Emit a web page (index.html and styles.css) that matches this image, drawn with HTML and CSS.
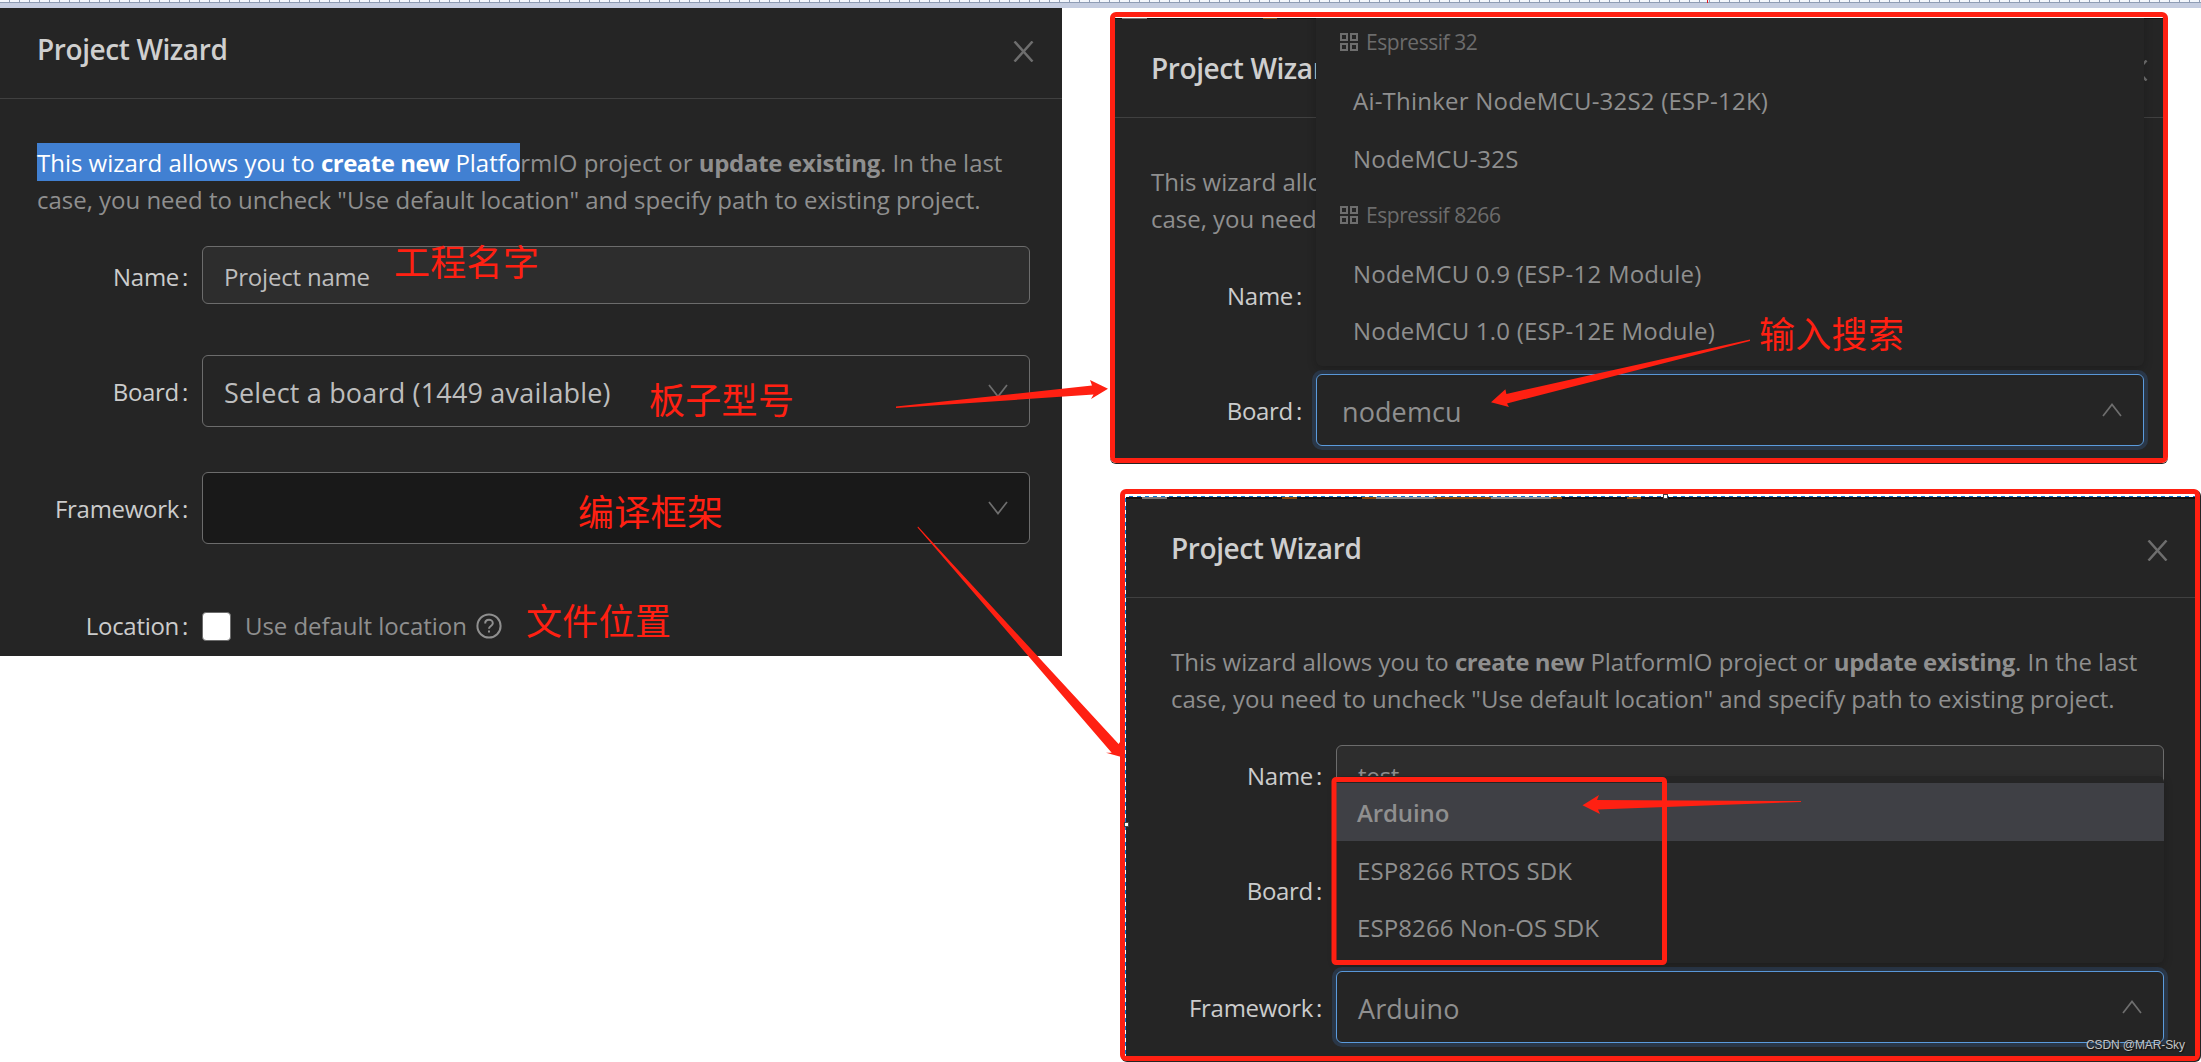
FILE: index.html
```html
<!DOCTYPE html>
<html lang="zh-CN">
<head>
  <meta charset="UTF-8">
  <title>PlatformIO Project Wizard</title>
  <link rel="stylesheet" href="styles.css">
</head>
<body>
  <svg class="defs" width="0" height="0">
    <symbol id="close" viewBox="0 0 21 21"><path d="M1.5 0.5L19.5 20.5M19.5 0.5L1.5 20.5"/></symbol>
    <symbol id="down" viewBox="0 0 20 14"><path d="M1 1L10 12.5L19 1"/></symbol>
    <symbol id="up" viewBox="0 0 20 14"><path d="M1 13L10 1.5L19 13"/></symbol>
    <symbol id="grid" viewBox="0 0 18 18"><path d="M1 1h6v6h-6zM11 1h6v6h-6zM1 11h6v6h-6zM11 11h6v6h-6z"/></symbol>
  </svg>

  <div class="ruler"><i class="ruler-mark"></i></div>

  <main>
    <section class="wizard main-wizard">
      <header>
        <h2>Project Wizard</h2>
        <svg class="close"><use href="#close"/></svg>
      </header>
      <div class="content">
        <p class="intro"><span class="selected">This wizard allows you to <b>create new</b> Platfo</span>rmIO project or <b>update existing</b>. In the last<br>case, you need to uncheck "Use default location" and specify path to existing project.</p>
        <div class="row name-row">
          <label>Name<i>:</i></label>
          <div class="control input">Project name</div>
        </div>
        <div class="row board-row">
          <label>Board<i>:</i></label>
          <div class="control select"><span>Select a board (1449 available)</span><svg class="arrow"><use href="#down"/></svg></div>
        </div>
        <div class="row framework-row">
          <label>Framework<i>:</i></label>
          <div class="control select disabled"><svg class="arrow"><use href="#down"/></svg></div>
        </div>
        <div class="row location-row">
          <label>Location<i>:</i></label>
          <span class="checkbox"></span>
          <span class="check-text">Use default location</span>
          <svg class="help" viewBox="0 0 26 26"><circle cx="13" cy="13" r="11.6"/><path d="M9.2 10.4c0-2.2 1.7-3.6 3.8-3.6s3.8 1.4 3.8 3.4c0 2.8-3.8 2.8-3.8 5.6M13 17.6v2"/></svg>
        </div>
      </div>
    </section>

    <div class="shots">
      <div class="shot shot-board">
        <section class="wizard">
          <header>
            <h2>Project Wizard</h2>
            <svg class="close"><use href="#close"/></svg>
          </header>
          <div class="content">
            <p class="intro">This wizard allows<br>case, you need</p>
            <div class="row name-row">
              <label>Name<i>:</i></label>
              <div class="control input"></div>
            </div>
            <div class="row board-row">
              <label>Board<i>:</i></label>
              <div class="control select focused search">
                <span>nodemcu</span><svg class="arrow"><use href="#up"/></svg>
                <ul class="menu">
                  <li class="group"><svg><use href="#grid"/></svg>Espressif 32</li>
                  <li>Ai-Thinker NodeMCU-32S2 (ESP-12K)</li>
                  <li>NodeMCU-32S</li>
                  <li class="group"><svg><use href="#grid"/></svg>Espressif 8266</li>
                  <li>NodeMCU 0.9 (ESP-12 Module)</li>
                  <li>NodeMCU 1.0 (ESP-12E Module)</li>
                </ul>
              </div>
            </div>
          </div>
        </section>
      </div>

      <div class="shot shot-framework">
        <section class="wizard">
          <header>
            <h2>Project Wizard</h2>
            <svg class="close"><use href="#close"/></svg>
          </header>
          <div class="content">
            <p class="intro">This wizard allows you to <b>create new</b> PlatformIO project or <b>update existing</b>. In the last<br>case, you need to uncheck "Use default location" and specify path to existing project.</p>
            <div class="row name-row">
              <label>Name<i>:</i></label>
              <div class="control input typed">test</div>
            </div>
            <div class="row board-row">
              <label>Board<i>:</i></label>
              <div class="control select"></div>
            </div>
            <div class="row framework-row">
              <label>Framework<i>:</i></label>
              <div class="control select focused">
                <span>Arduino</span><svg class="arrow"><use href="#up"/></svg>
                <ul class="menu">
                  <li class="active">Arduino</li>
                  <li>ESP8266 RTOS SDK</li>
                  <li>ESP8266 Non-OS SDK</li>
                </ul>
              </div>
            </div>
          </div>
        </section>
        <i class="handle handle-top"></i>
        <i class="handle handle-left"></i>
      </div>
    </div>
  </main>

  <!-- red notes on top of everything -->
  <span class="note note-name">工程名字</span>
  <span class="note note-board">板子型号</span>
  <span class="note note-framework">编译框架</span>
  <span class="note note-location">文件位置</span>
  <span class="note note-search">输入搜索</span>
  <svg class="arrows" viewBox="0 0 2201 1062">
    <path d="M896 406.5L1092 385.5L1090 380L1108 388.7L1091 399L1093.5 394.5L896 408z"/>
    <path d="M918 526.5L1118.6 744L1121 740.5L1125 758L1106 752.7L1111.7 752.7L917.5 527.5z"/>
    <path d="M1750 339.5L1506.4 394L1505.4 389.3L1491 402.3L1509 407L1507 403.5L1750 341z"/>
    <path d="M1801 801L1597 800L1599 795L1582.5 805.3L1600 814L1598 809.5L1801 802z"/>
    <rect x="1334" y="779.5" width="330.5" height="183" rx="2"/>
  </svg>
  <span class="watermark">CSDN @MAR-Sky</span>
</body>
</html>
```

FILE: styles.css
```css
* {
  box-sizing: border-box;
}
body {
  position: relative;
  width: 2201px;
  height: 1062px;
  margin: 0;
  overflow: hidden;
  background: #fff;
  font-family: "Open Sans", "Noto Sans CJK SC", sans-serif;
  font-size: 24px;
  letter-spacing: -0.2px;
  color: #8f8f8f;
}
i {
  font-style: normal;
}
.defs {
  position: absolute;
}
svg {
  fill: none;
  stroke: #6e6e6e;
  stroke-width: 2;
  flex: none;
}

/* top ruler */
.ruler {
  position: relative;
  height: 8px;
  background:
    linear-gradient(#8f9db5, #8f9db5) 0 2px / 100% 1px no-repeat,
    repeating-linear-gradient(90deg, transparent 0 9px, #8f9db5 9px 10px) 0 0 / 100% 2px no-repeat,
    linear-gradient(#f3f6fc 0 3px, #c5cde0 3px);
}
.ruler-mark {
  position: absolute;
  left: 1707px;
  top: 0;
  width: 1px;
  height: 3px;
  background: #e8101c;
}

main {
  display: flex;
}

/* wizard dialog */
.wizard {
  --left: 37px;
  background: #252525;
  overflow: hidden;
}
.main-wizard {
  width: 1062px;
  height: 648px;
}
.wizard header {
  display: flex;
  justify-content: space-between;
  align-items: flex-end;
  height: 91px;
  padding: 0 28px 30px var(--left);
  border-bottom: 1px solid #404040;
}
h2 {
  margin: 0;
  font-size: 28px;
  line-height: 38px;
  font-weight: 600;
  letter-spacing: -0.4px;
  color: #cfcfcf;
}
.close {
  width: 21px;
  height: 21px;
  margin-bottom: 6px;
  stroke-width: 2.5;
}
.content {
  padding: 45px 0 0 var(--left);
}
.intro {
  margin: 0;
  line-height: 37px;
  letter-spacing: -0.02px;
  white-space: nowrap;
}
.intro b {
  letter-spacing: -0.4px;
}
.intro b:last-of-type {
  letter-spacing: -0.3px;
}
.selected {
  padding: 3px 0 2px;
  background: #4180d2;
  color: #fff;
}
.selected b:last-of-type {
  letter-spacing: -0.5px;
}
.row {
  display: flex;
  align-items: center;
}
.row label {
  flex: 0 0 165px;
  padding: 0 14px 0 0;
  text-align: right;
  letter-spacing: -0.3px;
  color: #cccccc;
}
.row label i {
  margin-left: 3px;
}
.name-row {
  margin-top: 28px;
}
.name-row label {
  padding-top: 2px;
}
.board-row {
  margin-top: 51px;
}
.framework-row {
  margin-top: 45px;
}
.location-row {
  height: 30px;
  margin-top: 67px;
}
.control {
  position: relative;
  display: flex;
  flex: none;
  align-items: center;
  width: 828px;
  border: 1px solid #6c6c6c;
  border-radius: 6px;
}
.input {
  height: 58px;
  padding: 2px 21px 0;
  background: #2d2d2d;
  color: #bdbdbd;
}
.typed {
  color: #8f8f8f;
}
.select {
  justify-content: space-between;
  height: 72px;
  padding: 0 21px;
}
.select > span {
  padding-top: 2px;
  font-size: 27px;
  letter-spacing: 0.18px;
  color: #bdbdbd;
}
.disabled {
  background: #191919;
}
.focused {
  border-color: #5b9bdd;
  box-shadow: 0 0 0 4px #2a3748;
}
.focused > span {
  letter-spacing: 0.1px;
  color: #8f8f8f;
}
.search {
  padding-left: 25px;
}
.arrow {
  width: 20px;
  height: 14px;
  margin-left: auto;
  stroke-width: 1.7;
}
.checkbox {
  width: 29px;
  height: 29px;
  border: 1px solid #6c6c6c;
  border-radius: 4px;
  background: #fff;
}
.check-text {
  margin: -2px 0 0 14px;
  letter-spacing: -0.05px;
}
.help {
  width: 26px;
  height: 26px;
  margin-left: 9px;
  stroke: #8f8f8f;
}
.location-row label {
  padding-bottom: 2px;
}

/* dropdown */
.menu {
  position: absolute;
  left: -1px;
  bottom: 79px;
  width: 828px;
  margin: 0;
  padding: 7px 0;
  list-style: none;
  border-radius: 6px;
  background: #252525;
  box-shadow: 0 3px 10px rgba(0, 0, 0, 0.2);
}
.menu li {
  height: 57.6px;
  padding-left: 21px;
  line-height: 59px;
  letter-spacing: 0.1px;
}
.search .menu li {
  padding-left: 37px;
  letter-spacing: 0.22px;
}
.menu li.active {
  background: #3f4045;
  font-weight: 600;
  letter-spacing: -0.1px;
}
.search .menu li.group {
  display: flex;
  align-items: center;
  padding-left: 24px;
  font-size: 21px;
  letter-spacing: -0.45px;
  color: #6c6c6c;
}
.group svg {
  width: 18px;
  height: 18px;
  margin-right: 8px;
}

/* framed screenshots */
.shots {
  margin-left: 48px;
  padding-top: 4px;
}
.shot {
  position: relative;
  border: 5px solid #ff2012;
  border-radius: 6px;
}
.shot .wizard {
  height: 100%;
}
.shot-board {
  width: 1058px;
  height: 451px;
  padding-top: 1px;
  box-shadow: 0 1px 0 #252525;
}
.shot-board .wizard {
  --left: 36px;
}
.shot-board header {
  height: 100px;
  padding-right: 15px;
  background: linear-gradient(90deg, #111 7px, #777 7px 32px, #111 32px 148px, #8a4708 148px 162px, #111 162px) 0 0 / 100% 1px no-repeat;
}
.shot-framework {
  width: 1080px;
  height: 572px;
  margin: 26px 0 0 10px;
  padding: 3px 0 0 1px;
  background:
    repeating-linear-gradient(90deg, #fff 0 4px, #0b74d8 4px 8px) 0 2px / 100% 1px no-repeat,
    repeating-linear-gradient(#fff 0 4px, #0b74d8 4px 8px) 0 0 / 1px 100% no-repeat,
    #fff;
  box-shadow: 1px 1px 0 #252525;
}
.shot-framework .wizard {
  --left: 45px;
}
.shot-framework header {
  height: 101px;
  padding-right: 27px;
  background: linear-gradient(90deg, #111 16px, #777 16px 41px, #111 41px 156px, #8a4708 156px 171px, #111 171px 236px, #8a4708 236px 250px, #888 250px 309px, #8a4708 309px 365px, #888 365px 425px, #8a4708 425px 436px, #111 436px 501px, #8a4708 501px 515px, #111 515px) 0 0 / 100% 2px no-repeat;
}
.handle {
  position: absolute;
  width: 5px;
  height: 5px;
  border: 1px solid #444;
  background: #fff;
}
.handle-top {
  left: 538px;
  top: 0;
}
.handle-left {
  left: -1px;
  top: 328px;
}

/* notes */
.note {
  position: absolute;
  font-family: "Noto Sans CJK SC", sans-serif;
  font-size: 36px;
  line-height: 36px;
  letter-spacing: 0.3px;
  color: #ff2012;
}
.note-name {
  left: 394px;
  top: 242px;
}
.note-board {
  left: 649px;
  top: 380px;
}
.note-framework {
  left: 578px;
  top: 492px;
}
.note-location {
  left: 526px;
  top: 601px;
}
.note-search {
  left: 1759px;
  top: 314px;
}
.arrows {
  position: absolute;
  left: 0;
  top: 0;
  width: 2201px;
  height: 1062px;
  stroke: none;
  fill: #ff2012;
}
.arrows rect {
  fill: none;
  stroke: #ff2012;
  stroke-width: 5;
}
.watermark {
  position: absolute;
  left: 2086px;
  top: 1037px;
  font-family: "Liberation Sans", sans-serif;
  font-size: 12px;
  line-height: 17px;
  letter-spacing: -0.1px;
  color: #c4c4c4;
  text-shadow: 1px 1px 1px #111;
}
```
